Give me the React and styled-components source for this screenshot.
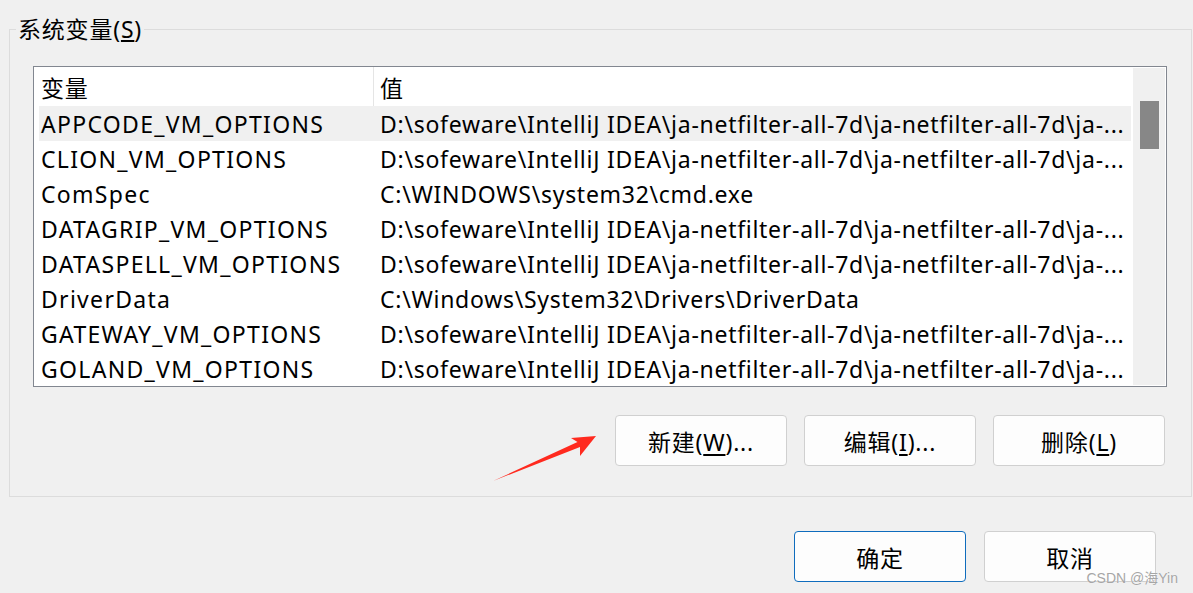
import React from 'react';
import styled, { createGlobalStyle } from 'styled-components';

const GlobalStyle = createGlobalStyle`
  html, body {
    margin: 0;
    padding: 0;
    background: #f0f0f0;
  }
  body {
    font-family: "Noto Sans", "Noto Sans CJK SC", sans-serif;
    color: #000;
  }
`;

const Page = styled.div`
  position: relative;
  width: 1193px;
  height: 593px;
  box-sizing: border-box;
  padding: 15px 1px 0 9px;
  background: #f0f0f0;
  overflow: hidden;
  font-size: 23px;
  letter-spacing: 0.8px;
`;

const Group = styled.fieldset`
  margin: 0;
  min-width: 0;
  border: 1px solid #dcdcdc;
  padding: 23px 24px 30px 23px;
`;

const GroupTitle = styled.legend`
  margin-left: -17px;
  padding: 0 2px;
  line-height: 28px;
`;

const ListBox = styled.div`
  display: flex;
  height: 321px;
  box-sizing: border-box;
  border: 1px solid #828790;
  background: #fff;
`;

const Rows = styled.div`
  flex: 1;
  min-width: 0;
  display: flex;
  flex-direction: column;
`;

const HeaderRow = styled.div`
  display: grid;
  grid-template-columns: 334px 1fr;
  height: 39px;
  margin-left: 5px;
  align-items: center;
`;

const HeaderCell = styled.div`
  height: 100%;
  display: flex;
  align-items: center;
  padding-left: ${({ $first }) => ($first ? '2px' : '6px')};
  border-left: ${({ $first }) => ($first ? 'none' : '1px solid #e5e5e5')};
  box-sizing: border-box;
`;

const Row = styled.div`
  display: grid;
  grid-template-columns: 334px 1fr;
  height: 35px;
  margin-left: 5px;
  align-items: center;
  background: ${({ $selected }) => ($selected ? '#f0f0f0' : 'transparent')};
`;

const Cell = styled.div`
  padding-left: ${({ $first }) => ($first ? '2px' : '7px')};
  letter-spacing: ${({ $first }) => ($first ? '1.3px' : '0.72px')};
  white-space: nowrap;
  overflow: hidden;
`;

const ScrollBar = styled.div`
  width: 35px;
  box-sizing: border-box;
  border: 1px solid #fff;
  border-left-width: 2px;
  background: #f0f0f0;
  display: flex;
  justify-content: center;
  padding-top: 33px;
`;

const Thumb = styled.div`
  width: 19px;
  height: 48px;
  background: #878787;
`;

const ButtonRow = styled.div`
  display: flex;
  justify-content: flex-end;
  gap: ${({ $gap }) => $gap}px;
  margin-top: ${({ $top }) => $top}px;
  padding-right: ${({ $right }) => $right}px;
`;

const Button = styled.button`
  width: 172px;
  height: 51px;
  box-sizing: border-box;
  border: 1px solid ${({ $primary }) => ($primary ? '#0f6cbd' : '#d0d0d0')};
  border-radius: 4px;
  background: #fdfdfd;
  font-family: "Noto Sans", "Noto Sans CJK SC", sans-serif;
  font-size: 23px;
  letter-spacing: 0.8px;
  color: #000;
  padding: 0;

  u {
    text-underline-offset: 3px;
  }
`;

const Watermark = styled.div`
  position: absolute;
  right: 15px;
  bottom: 6px;
  font-family: "Liberation Sans", "Noto Sans CJK SC", sans-serif;
  font-size: 14px;
  letter-spacing: 0;
  color: #a6a6a6;
  text-shadow: 0 0 1px #fff;
`;

const Arrow = styled.svg`
  position: absolute;
  left: 0;
  top: 0;
  pointer-events: none;
`;

const longPath = 'D:\\sofeware\\IntelliJ IDEA\\ja-netfilter-all-7d\\ja-netfilter-all-7d\\ja-...';

const variables = [
  { name: 'APPCODE_VM_OPTIONS', value: longPath },
  { name: 'CLION_VM_OPTIONS', value: longPath },
  { name: 'ComSpec', value: 'C:\\WINDOWS\\system32\\cmd.exe' },
  { name: 'DATAGRIP_VM_OPTIONS', value: longPath },
  { name: 'DATASPELL_VM_OPTIONS', value: longPath },
  { name: 'DriverData', value: 'C:\\Windows\\System32\\Drivers\\DriverData' },
  { name: 'GATEWAY_VM_OPTIONS', value: longPath },
  { name: 'GOLAND_VM_OPTIONS', value: longPath },
];

const App = () => (
  <>
    <GlobalStyle />
    <Page>
      <Group>
        <GroupTitle>系统变量(<u>S</u>)</GroupTitle>
        <ListBox>
          <Rows>
            <HeaderRow>
              <HeaderCell $first>变量</HeaderCell>
              <HeaderCell>值</HeaderCell>
            </HeaderRow>
            {variables.map((v, i) => (
              <Row key={v.name} $selected={i === 0}>
                <Cell $first>{v.name}</Cell>
                <Cell>{v.value}</Cell>
              </Row>
            ))}
          </Rows>
          <ScrollBar>
            <Thumb />
          </ScrollBar>
        </ListBox>
        <ButtonRow $gap={17} $top={28} $right={2}>
          <Button>新建(<u>W</u>)...</Button>
          <Button>编辑(<u>I</u>)...</Button>
          <Button>删除(<u>L</u>)</Button>
        </ButtonRow>
      </Group>
      <ButtonRow $gap={18} $top={34} $right={36}>
        <Button $primary>确定</Button>
        <Button>取消</Button>
      </ButtonRow>
      <Arrow width="1193" height="593" viewBox="0 0 1193 593">
        <polygon
          points="493,481 577.5,442 571,438 596,436 580,456 580,447"
          fill="#ff2a1f"
        />
      </Arrow>
      <Watermark>CSDN @海Yin</Watermark>
    </Page>
  </>
);

export default App;
